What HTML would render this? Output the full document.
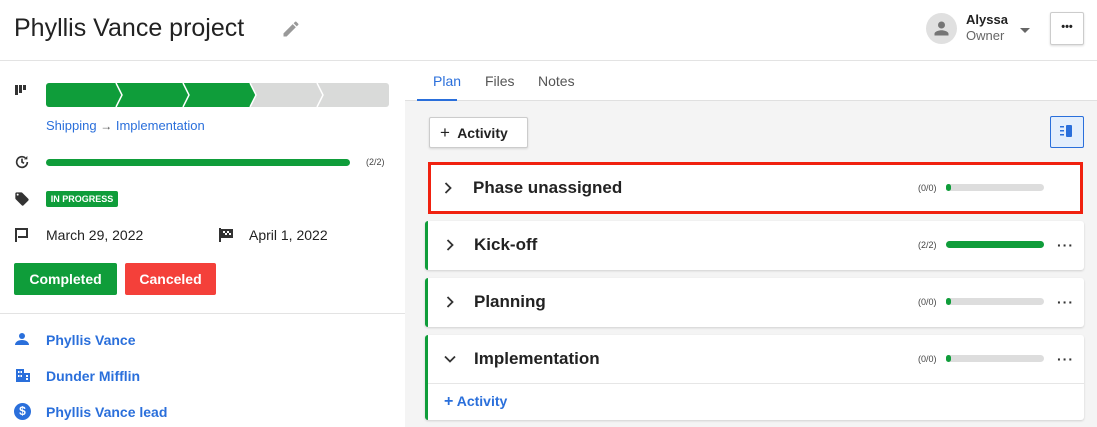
<!DOCTYPE html><html><head><style>
*{box-sizing:border-box;margin:0;padding:0}
body{width:1097px;height:427px;overflow:hidden;font-family:"Liberation Sans",sans-serif;background:#fff;position:relative;color:#222}
.a{position:absolute}
.blue{color:#2a6fdb}
.card{position:absolute;left:425px;width:659px;background:#fff;border-radius:3px;box-shadow:0 1px 2px rgba(0,0,0,.15);border-left:3px solid #0f9d3a}
.card .t{position:absolute;left:46px;top:14px;font-size:17px;font-weight:bold;color:#222}
.chev{position:absolute;left:18px;top:18px}
.cnt{position:absolute;font-size:9px;color:#444}
.bar{position:absolute;height:7px;border-radius:4px;background:#ddd;width:98px}
.bar i{display:block;height:7px;border-radius:4px;background:#0f9d3a}
.dots{position:absolute;font-size:14px;font-weight:bold;letter-spacing:1px;color:#333}
</style></head><body>
<div class="a" style="left:14px;top:14px;font-size:25px;color:#222">Phyllis Vance project</div>
<svg class="a" style="left:281px;top:19px" width="20" height="20" viewBox="0 0 24 24"><path fill="#999" d="M3 17.25V21h3.75L17.8 9.94l-3.75-3.75L3 17.25zM20.7 7.04a1 1 0 000-1.41l-2.34-2.34a1 1 0 00-1.41 0l-1.83 1.83 3.75 3.75 1.83-1.83z"/></svg>
<div class="a" style="left:926px;top:13px;width:31px;height:31px;border-radius:50%;background:#e0e0e0"></div>
<svg class="a" style="left:931px;top:18px" width="21" height="21" viewBox="0 0 24 24"><path fill="#757575" d="M12 12a4 4 0 100-8 4 4 0 000 8zm0 2c-2.7 0-8 1.3-8 4v2h16v-2c0-2.7-5.3-4-8-4z"/></svg>
<div class="a" style="left:966px;top:12px;font-size:13px;font-weight:bold">Alyssa</div>
<div class="a" style="left:966px;top:28px;font-size:13px;color:#666">Owner</div>
<div class="a" style="left:1020px;top:28px;width:0;height:0;border-left:5px solid transparent;border-right:5px solid transparent;border-top:5px solid #666"></div>
<div class="a" style="left:1050px;top:12px;width:34px;height:33px;border:1px solid #ccc;border-radius:2px;box-shadow:0 1px 2px rgba(0,0,0,.15);text-align:center;font-size:11px;line-height:28px;font-weight:bold">•••</div>
<div class="a" style="left:0;top:60px;width:1097px;height:1px;background:#e3e3e3"></div>
<svg class="a" style="left:15px;top:85px" width="12" height="12" viewBox="0 0 12 12"><rect x="0" y="0" width="3" height="10" fill="#333"/><rect x="4" y="0" width="3" height="8" fill="#333"/><rect x="8" y="0" width="3" height="5" fill="#333"/></svg>
<svg class="a" style="left:46px;top:83px" width="343" height="24" viewBox="0 0 343 24">
<rect width="343" height="24" rx="3" fill="#d9dad9"/>
<path d="M3 0H70L76 12L70 24H3a3 3 0 01-3-3V3a3 3 0 013-3z" fill="#0f9d3a"/>
<path d="M70 0H137L143 12L137 24H70L76 12z" fill="#0f9d3a"/>
<path d="M137 0H204L210 12L204 24H137L143 12z" fill="#0f9d3a"/>
<path d="M70 0L76 12L70 24M137 0L143 12L137 24M204 0L210 12L204 24M271 0L277 12L271 24" stroke="#fff" stroke-width="1.5" fill="none"/>
</svg>
<div class="a blue" style="left:46px;top:118px;font-size:13px">Shipping <span style="color:#555;font-size:12px">→</span> Implementation</div>
<svg class="a" style="left:14px;top:154px" width="16" height="16" viewBox="0 0 24 24"><path fill="none" stroke="#333" stroke-width="2.5" d="M20 12a8 8 0 11-3-6.2M12 7v5l3 2"/><path d="M20 3v5h-5z" fill="#333"/></svg>
<div class="a" style="left:46px;top:159px;width:304px;height:7px;border-radius:4px;background:#0f9d3a"></div>
<div class="a" style="left:366px;top:157px;font-size:9px;color:#444">(2/2)</div>
<svg class="a" style="left:14px;top:191px" width="16" height="16" viewBox="0 0 24 24"><path fill="#333" d="M21.4 11.6l-9-9A2 2 0 0011 2H4a2 2 0 00-2 2v7c0 .55.22 1.05.59 1.42l9 9a2 2 0 002.82 0l7-7a2 2 0 000-2.82zM5.5 7A1.5 1.5 0 115.5 4a1.5 1.5 0 010 3z"/></svg>
<div class="a" style="left:46px;top:191px;width:72px;height:16px;background:#0f9d3a;border-radius:2px;color:#fff;font-size:9px;font-weight:bold;text-align:center;line-height:16px">IN PROGRESS</div>
<svg class="a" style="left:15px;top:228px" width="15" height="15" viewBox="0 0 15 15"><path d="M1 14V1h11v8H3" fill="none" stroke="#333" stroke-width="2"/></svg>
<div class="a" style="left:46px;top:227px;font-size:14px">March 29, 2022</div>
<svg class="a" style="left:219px;top:228px" width="14" height="14" viewBox="0 0 14 14"><rect x="0" y="0" width="2" height="14" fill="#333"/><rect x="2" y="1" width="12" height="9" fill="#333"/><rect x="4" y="3" width="2" height="2" fill="#fff"/><rect x="8" y="3" width="2" height="2" fill="#fff"/><rect x="6" y="5" width="2" height="2" fill="#fff"/><rect x="10" y="5" width="2" height="2" fill="#fff"/></svg>
<div class="a" style="left:249px;top:227px;font-size:14px">April 1, 2022</div>
<div class="a" style="left:14px;top:263px;width:103px;height:32px;background:#0f9d3a;border-radius:2px;color:#fff;font-size:14px;font-weight:bold;text-align:center;line-height:32px">Completed</div>
<div class="a" style="left:125px;top:263px;width:91px;height:32px;background:#f4403a;border-radius:2px;color:#fff;font-size:14px;font-weight:bold;text-align:center;line-height:32px">Canceled</div>
<div class="a" style="left:0;top:313px;width:405px;height:1px;background:#e3e3e3"></div>
<svg class="a" style="left:15px;top:333px" width="14" height="12" viewBox="0 0 14 12"><circle cx="7" cy="3" r="3" fill="#2a6fdb"/><path d="M0 12c0-3 3-5 7-5s7 2 7 5z" fill="#2a6fdb"/></svg>
<div class="a blue" style="left:46px;top:332px;font-size:14px;font-weight:bold">Phyllis Vance</div>
<svg class="a" style="left:16px;top:369px" width="14" height="13" viewBox="0 0 14 13"><rect x="0" y="0" width="8" height="13" fill="#2a6fdb"/><rect x="8" y="4" width="6" height="9" fill="#2a6fdb"/><rect x="2" y="2" width="1.5" height="2" fill="#fff"/><rect x="4.5" y="2" width="1.5" height="2" fill="#fff"/><rect x="2" y="6" width="1.5" height="2" fill="#fff"/><rect x="4.5" y="6" width="1.5" height="2" fill="#fff"/><rect x="10" y="6" width="2" height="2" fill="#fff"/><rect x="10" y="9" width="2" height="2" fill="#fff"/></svg>
<div class="a blue" style="left:46px;top:368px;font-size:14px;font-weight:bold">Dunder Mifflin</div>
<div class="a" style="left:14px;top:403px;width:17px;height:17px;border-radius:50%;background:#2a6fdb;color:#fff;font-size:12px;font-weight:bold;text-align:center;line-height:17px">$</div>
<div class="a blue" style="left:46px;top:404px;font-size:14px;font-weight:bold">Phyllis Vance lead</div>
<div class="a" style="left:405px;top:101px;width:692px;height:326px;background:#f4f4f4"></div>
<div class="a" style="left:405px;top:100px;width:692px;height:1px;background:#e0e0e0"></div>
<div class="a blue" style="left:433px;top:73px;font-size:14px">Plan</div>
<div class="a" style="left:417px;top:99px;width:40px;height:2px;background:#2a6fdb"></div>
<div class="a" style="left:485px;top:73px;font-size:14px;color:#555">Files</div>
<div class="a" style="left:538px;top:73px;font-size:14px;color:#555">Notes</div>
<div class="a" style="left:429px;top:117px;width:99px;height:31px;background:#fff;border:1px solid #ccc;border-radius:2px;box-shadow:0 1px 2px rgba(0,0,0,.12);font-size:14px;font-weight:bold;line-height:29px;padding-left:10px"><span style="font-size:17px;font-weight:normal">+</span>&nbsp; Activity</div>
<div class="a" style="left:1050px;top:116px;width:34px;height:32px;background:#e3eefc;border:1px solid #2a6fdb;border-radius:2px"></div>
<svg class="a" style="left:1060px;top:125px" width="14" height="13" viewBox="0 0 14 13"><rect x="0" y="1" width="4" height="1.5" fill="#2a6fdb"/><rect x="0" y="5" width="4" height="1.5" fill="#2a6fdb"/><rect x="0" y="9" width="4" height="1.5" fill="#2a6fdb"/><rect x="6" y="0" width="6" height="12" rx="1" fill="#2a6fdb"/></svg>
<div class="a" style="left:428px;top:162px;width:655px;height:52px;background:#fff;border:3px solid #f0210f"></div>
<svg class="a" style="left:444px;top:182px" width="8" height="12" viewBox="0 0 8 12"><path d="M1.5 1l5 5-5 5" fill="none" stroke="#333" stroke-width="1.8"/></svg>
<div class="a" style="left:473px;top:178px;font-size:17px;font-weight:bold">Phase unassigned</div>
<div class="cnt" style="left:918px;top:183px">(0/0)</div>
<div class="bar" style="left:946px;top:184px"><i style="width:5px"></i></div>
<div class="card" style="top:221px;height:49px"><svg class="chev" width="8" height="12" viewBox="0 0 8 12"><path d="M1.5 1l5 5-5 5" fill="none" stroke="#333" stroke-width="1.8"/></svg><div class="t">Kick-off</div><div class="cnt" style="left:490px;top:19px">(2/2)</div><div class="bar" style="left:518px;top:20px"><i style="width:98px"></i></div><div class="dots" style="left:629px;top:16px">···</div></div>
<div class="card" style="top:278px;height:49px"><svg class="chev" width="8" height="12" viewBox="0 0 8 12"><path d="M1.5 1l5 5-5 5" fill="none" stroke="#333" stroke-width="1.8"/></svg><div class="t">Planning</div><div class="cnt" style="left:490px;top:19px">(0/0)</div><div class="bar" style="left:518px;top:20px"><i style="width:5px"></i></div><div class="dots" style="left:629px;top:16px">···</div></div>
<div class="card" style="top:335px;height:85px"><svg class="chev" width="12" height="8" viewBox="0 0 12 8" style="left:16px;top:20px"><path d="M1 1.5l5 5 5-5" fill="none" stroke="#333" stroke-width="1.8"/></svg><div class="t">Implementation</div><div class="cnt" style="left:490px;top:19px">(0/0)</div><div class="bar" style="left:518px;top:20px"><i style="width:5px"></i></div><div class="dots" style="left:629px;top:16px">···</div>
<div style="position:absolute;left:0;top:48px;width:656px;height:1px;background:#e6e6e6"></div>
<div class="blue" style="position:absolute;left:16px;top:58px;font-size:14px;font-weight:bold"><span style="font-size:16px">+</span> Activity</div></div>
</body></html>
